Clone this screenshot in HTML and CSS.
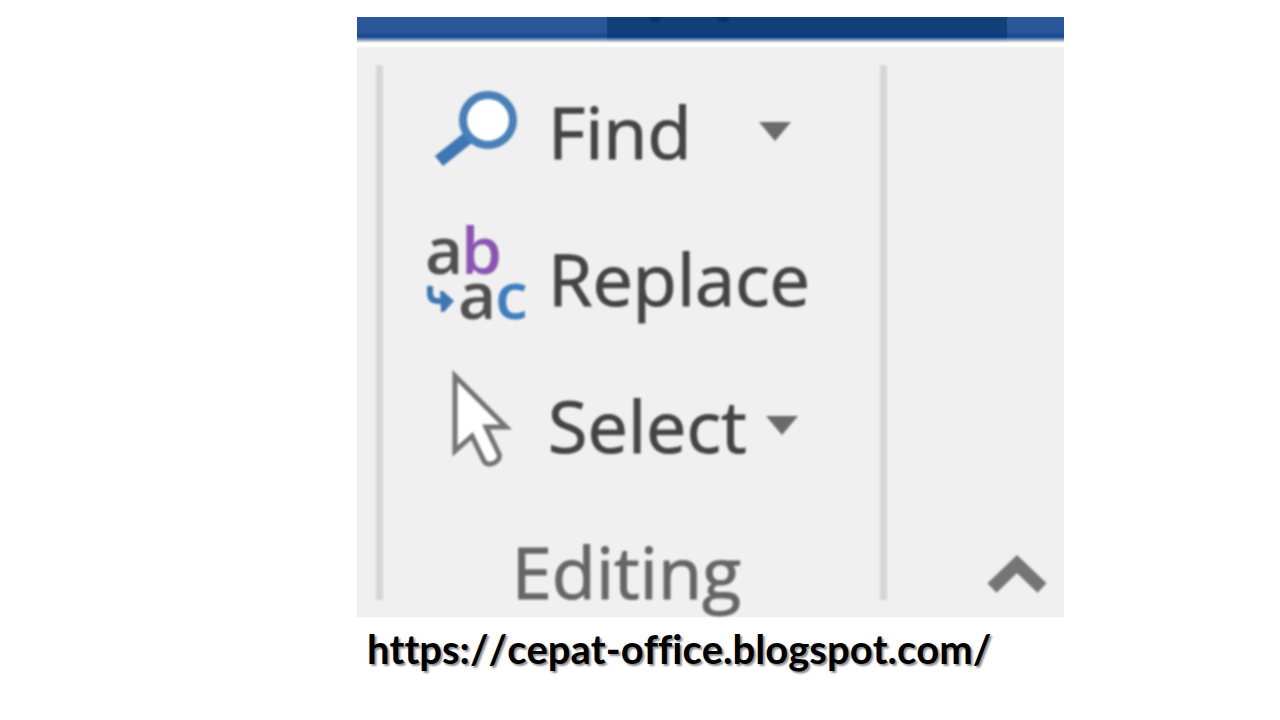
FILE: index.html
```html
<!DOCTYPE html>
<html lang="en">
<head>
  <meta charset="UTF-8">
  <meta name="viewport" content="width=device-width, initial-scale=1.0">
  <title>Editing Group</title>
  <link rel="stylesheet" href="styles.css">
</head>
<body>
  <main class="page">
    <section class="ribbon">
      <div class="title-bar">
        <div class="title-tab">
          <span class="tab-mark"></span>
          <span class="tab-mark"></span>
        </div>
      </div>

      <div class="ribbon-body">
        <div class="separator"></div>

        <div class="group">
          <button class="command" type="button">
            <svg class="icon" viewBox="0 0 104 110" aria-hidden="true">
              <path d="M43 60 L13 84" stroke="#3f77b3" stroke-width="13" fill="none"/>
              <circle cx="62" cy="43" r="25" fill="#fff" stroke="#4a80b8" stroke-width="8"/>
            </svg>
            <span class="command-name">Find</span>
            <svg class="caret caret-far" viewBox="0 0 34 22" aria-hidden="true">
              <path d="M1 1 H33 L17 20 Z" fill="#6a6a6a"/>
            </svg>
          </button>

          <button class="command" type="button">
            <svg class="icon" viewBox="0 0 104 110" aria-hidden="true">
              <text class="icon-text" x="-1" y="50" fill="#505050">a</text>
              <text class="icon-text" x="35" y="50" fill="#8a55b0">b</text>
              <text class="icon-text" x="32" y="95" fill="#505050">a</text>
              <text class="icon-text" x="69" y="95" fill="#3f7fbf">c</text>
              <path d="M4 62 V69 Q4 77 12 77 H18" stroke="#3f77b3" stroke-width="6" fill="none"/>
              <path d="M14 67 H17 L28 77 L18 88 H15 Z" fill="#3f77b3"/>
            </svg>
            <span class="command-name">Replace</span>
          </button>

          <button class="command" type="button">
            <svg class="icon" viewBox="0 0 104 110" aria-hidden="true">
              <path d="M29 5 V80 L46 65 L58 90 Q61 95 68 92 Q75 88 73 83 L60 56 H80 Z" fill="#fff" stroke="#747474" stroke-width="5"/>
            </svg>
            <span class="command-name">Select</span>
            <svg class="caret" viewBox="0 0 34 22" aria-hidden="true">
              <path d="M1 1 H33 L17 20 Z" fill="#6a6a6a"/>
            </svg>
          </button>

          <div class="group-name">Editing</div>
        </div>

        <div class="separator"></div>

        <button class="collapse" type="button" aria-label="Collapse the ribbon">
          <svg class="chevron" viewBox="0 0 60 42" aria-hidden="true">
            <path d="M5 34 L30 10 L55 34" stroke="#757575" stroke-width="13" fill="none"/>
          </svg>
        </button>
      </div>
    </section>

    <a class="site-link" href="https://cepat-office.blogspot.com/">https://cepat-office.blogspot.com/</a>
  </main>
</body>
</html>
```
FILE: styles.css
```css
body {
  margin: 0;
  background: #fff;
  font-family: "Open Sans", "Noto Sans", sans-serif;
}

.page {
  display: grid;
  grid-template-columns: 357fr 707fr 216fr;
  padding-top: 17px;
}

.ribbon,
.site-link {
  grid-column: 2;
}

.ribbon {
  background: #f0f0f0;
}

/* blue strip with the open tab */
.title-bar {
  display: grid;
  grid-template-columns: 250fr 400fr 57fr;
  height: 31px;
  background: linear-gradient(#2b579a 15px, #1b4a93 18px, #1b4a93 20px, #fffdfa 26px, #fffdfa 29px, #f0f0f0);
}

.title-tab {
  grid-column: 2;
  display: flex;
  gap: 56px;
  height: 31px;
  padding-left: 42px;
  box-sizing: border-box;
  overflow: hidden;
  background: linear-gradient(#124078 15px, #083a80 18px, #083a80 20px, #fffdfa 26px, #fffdfa 29px, #f0f0f0);
}

.tab-mark {
  width: 12px;
  height: 5px;
  border-radius: 0 0 6px 6px;
  background: #06306c;
  filter: blur(1px);
}

.ribbon-body {
  display: grid;
  grid-template-columns: 7px 497fr 7px 177fr;
  padding-left: 19px;
}

.separator {
  margin: 17px 0;
  background: #d6d6d6;
  filter: blur(1px);
}

.group {
  padding-top: 10px;
}

.command {
  display: flex;
  align-items: center;
  width: 100%;
  height: 147px;
  padding: 0 0 0 43px;
  border: none;
  background: none;
  color: #444;
  font-family: inherit;
  font-size: 72px;
  line-height: 88px;
  text-align: left;
  -webkit-text-stroke: 1px;
  cursor: pointer;
  filter: blur(1px);
}

.command-name {
  padding-bottom: 2px;
}

.icon {
  flex: none;
  width: 104px;
  height: 110px;
  margin-right: 18px;
  overflow: visible;
}

.icon-text {
  font-size: 66px;
  font-weight: 600;
}

.caret {
  flex: none;
  width: 34px;
  height: 22px;
  margin-left: 18px;
}

.caret-far {
  margin-left: 66px;
}

.group-name {
  padding: 28px 10px 2px 0;
  color: #666;
  font-size: 72px;
  line-height: 88px;
  text-align: center;
  -webkit-text-stroke: 1px;
  filter: blur(1px);
}

.collapse {
  display: flex;
  align-items: flex-end;
  justify-content: flex-end;
  padding: 0 17px 21px 0;
  border: none;
  background: none;
  cursor: pointer;
  filter: blur(1px);
}

.chevron {
  width: 60px;
  height: 42px;
}

.site-link {
  padding-left: 10px;
  color: #000;
  font-family: Lato, sans-serif;
  font-size: 40px;
  font-weight: 700;
  font-kerning: none;
  font-variant-ligatures: none;
  line-height: 64px;
  text-decoration: none;
  text-shadow: 2px 2px 2px rgba(0, 0, 0, 0.45);
  white-space: nowrap;
}
```
